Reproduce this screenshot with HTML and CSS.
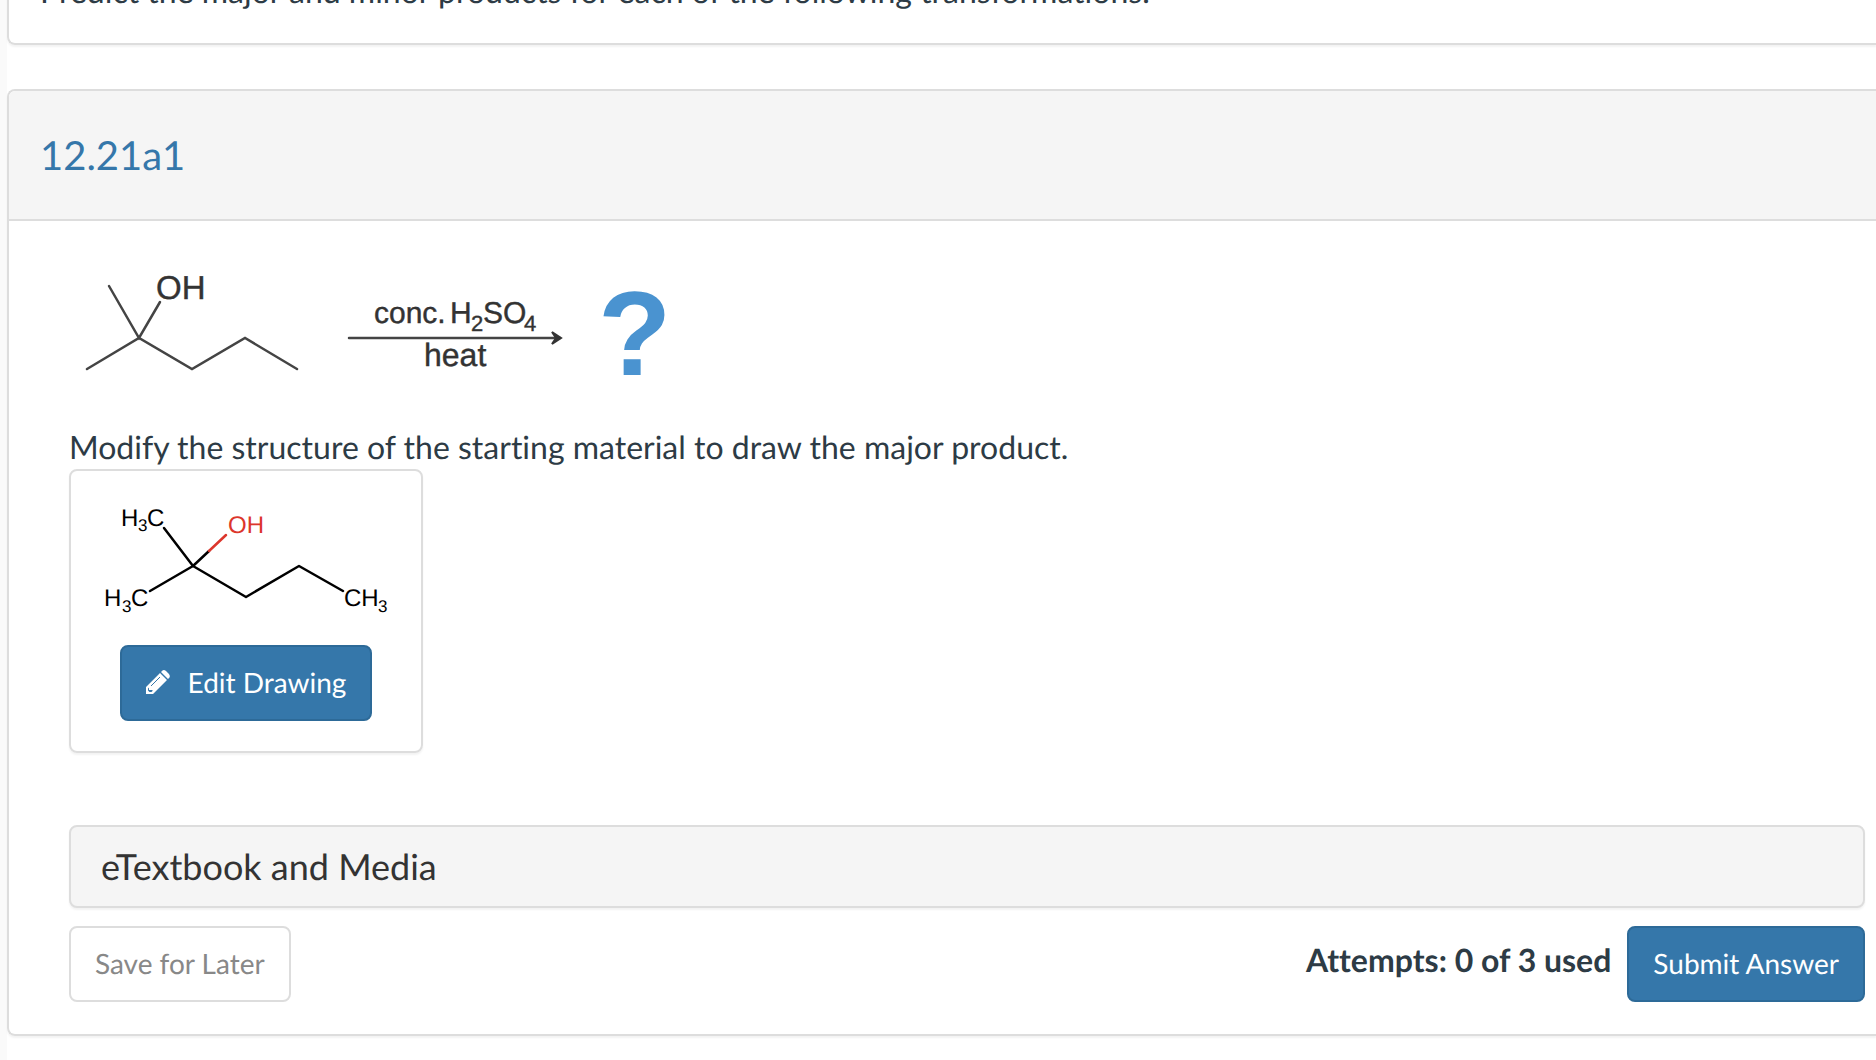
FILE: index.html
```html
<!DOCTYPE html>
<html lang="en">
<head>
<meta charset="utf-8">
<meta name="viewport" content="width=device-width, initial-scale=1">
<title>12.21a1</title>
<link rel="stylesheet" href="styles.css">
</head>
<body>
<main class="page">
  <section class="card intro">
    <p class="text">Predict the major and minor products for each of the following transformations.</p>
  </section>

  <section class="card question">
    <header class="question-header">
      <h2 class="question-title">12.21a1</h2>
    </header>
    <div class="question-body">
      <svg class="reaction" width="620" height="140" viewBox="69 251 620 140" role="img" aria-label="2-methylpentan-2-ol heated with concentrated sulfuric acid">
        <g class="reaction-bond">
          <path d="M109 286 139 338 160 302"/>
          <path d="M87 369 139 338 192 369 245 338 297 369"/>
          <path d="M349 338H560"/>
        </g>
        <path class="arrow-head" d="M552 332 561 338 552 344 556 338Z"/>
        <text class="reaction-text large" x="156" y="299">OH</text>
        <text class="reaction-text" x="374" y="323">conc.</text>
        <text class="reaction-text" x="450" y="323">H</text>
        <text class="reaction-text small" x="471" y="331">2</text>
        <text class="reaction-text" x="483" y="323">SO</text>
        <text class="reaction-text small" x="524" y="331">4</text>
        <text class="reaction-text medium" x="424" y="366">heat</text>
        <text class="unknown" x="598" y="375">?</text>
      </svg>

      <p class="text prompt">Modify the structure of the starting material to draw the major product.</p>

      <div class="drawing">
        <svg class="structure" width="300" height="126" viewBox="96 495 300 126" role="img" aria-label="Starting structure">
          <path class="bond" d="M164 528 193 566 209 551"/>
          <path class="bond oxygen" d="M209 551 226 535"/>
          <path class="bond" d="M150 591 193 566 246 597 299 566 343 591"/>
          <text class="atom" x="121" y="526">H</text>
          <text class="atom count" x="138" y="531">3</text>
          <text class="atom" x="147" y="526">C</text>
          <text class="atom oxygen" x="228" y="533">OH</text>
          <text class="atom" x="104" y="606">H</text>
          <text class="atom count" x="122" y="612">3</text>
          <text class="atom" x="131" y="606">C</text>
          <text class="atom" x="344" y="606">CH</text>
          <text class="atom count" x="378" y="612">3</text>
        </svg>
        <button class="button primary" type="button">
          <svg class="pencil" width="24" height="24" viewBox="0 0 24 24" aria-hidden="true">
            <path fill="#fff" d="M0 24V17L14 3 21 10 7 24ZM15 2 16.500 .500Q18 -.500 20 1L23 4Q24.500 6 23.500 7.500L22 9Z"/>
            <path fill="none" stroke="#3577aa" d="M5 16 14 7"/>
            <path fill="#3577aa" d="M2 18.500 3 17.500V20H6.500V21L5.500 22H3.500L2 20.500Z"/>
          </svg>
          Edit Drawing
        </button>
      </div>

      <a class="media" href="#media">eTextbook and Media</a>

      <div class="actions">
        <button class="button" type="button">Save for Later</button>
        <div class="submit">
          <strong class="attempts">Attempts: 0 of 3 used</strong>
          <button class="button primary" type="button">Submit Answer</button>
        </div>
      </div>
    </div>
  </section>
</main>
</body>
</html>
```
FILE: styles.css
```css
* {
  box-sizing: border-box;
}

body {
  margin: 0;
  background: #fafafa;
  color: #2d3b45;
  font: 32px/44px Lato, sans-serif;
  font-variant-ligatures: none;
  text-rendering: geometricPrecision;
  overflow-x: hidden;
}

.page {
  display: flow-root;
  margin: -63px 0 0 7px;
  padding-bottom: 24px;
  background: #fff;
}

.card {
  border: 2px solid #ddd;
  border-right: 0;
  border-radius: 8px 0 0 8px;
  box-shadow: 0 2px 2px rgba(0, 0, 0, .05);
  overflow: hidden;
}

.intro {
  padding: 30px 31px;
}

.text {
  margin: 0;
}

.question {
  margin-top: 44px;
}

.question-header {
  padding: 40px 31px;
  border-bottom: 2px solid #ddd;
  background: #f5f5f5;
}

.question-title {
  margin: 0;
  color: #3577aa;
  font-size: 40px;
  font-weight: 400;
  line-height: 48px;
}

.question-body {
  padding: 30px 11px 32px 60px;
}

.reaction,
.structure {
  display: block;
  max-width: 100%;
  overflow: visible;
  font-family: "Liberation Sans", Arial, sans-serif;
}

.reaction-bond {
  fill: none;
  stroke: #444;
  stroke-width: 2.5;
  stroke-linecap: round;
}

.arrow-head {
  fill: #333;
  stroke: #333;
  stroke-width: 2;
}

.reaction-text {
  fill: #333;
  stroke: #333;
  stroke-width: .4;
  font-size: 30px;
}

.reaction-text.large {
  font-size: 33px;
}

.reaction-text.medium {
  font-size: 32px;
}

.reaction-text.small {
  font-size: 22px;
}

.unknown {
  fill: #4a93d0;
  font-size: 120px;
  font-weight: 700;
}

.prompt {
  margin-top: 34px;
}

.drawing {
  width: fit-content;
  padding: 24px 25px 30px;
  border: 2px solid #ddd;
  border-radius: 8px;
  box-shadow: 0 2px 2px rgba(0, 0, 0, .05);
  display: flex;
  flex-direction: column;
  align-items: center;
  gap: 24px;
}

.bond {
  fill: none;
  stroke: #000;
  stroke-width: 2.5;
  stroke-linecap: round;
  stroke-linejoin: round;
}

.bond.oxygen {
  stroke: #dc362c;
}

.atom {
  fill: #000;
  font-size: 24px;
}

.atom.oxygen {
  fill: #dc362c;
}

.atom.count {
  font-size: 17px;
}

.button {
  display: inline-flex;
  align-items: center;
  gap: 18px;
  height: 76px;
  padding: 0 24px 2px;
  border: 2px solid #ddd;
  border-radius: 8px;
  background: #fff;
  color: #888;
  font: 28px/40px Lato, sans-serif;
  font-variant-ligatures: none;
  text-rendering: inherit;
  white-space: nowrap;
}

.button.primary {
  border-color: #2d6a98;
  background: #3577aa;
  color: #fff;
}

.pencil {
  overflow: visible;
}

.media {
  display: block;
  margin: 72px 0 18px;
  padding: 18px 30px;
  border: 2px solid #ddd;
  border-radius: 8px;
  box-shadow: 0 2px 2px rgba(0, 0, 0, .05);
  background: #f5f5f5;
  color: #333;
  font-size: 36px;
  line-height: 43px;
  text-decoration: none;
}

.actions,
.submit {
  display: flex;
  align-items: center;
}

.actions {
  justify-content: space-between;
}

.submit {
  gap: 16px;
}

.attempts {
  padding-bottom: 8px;
}
```
